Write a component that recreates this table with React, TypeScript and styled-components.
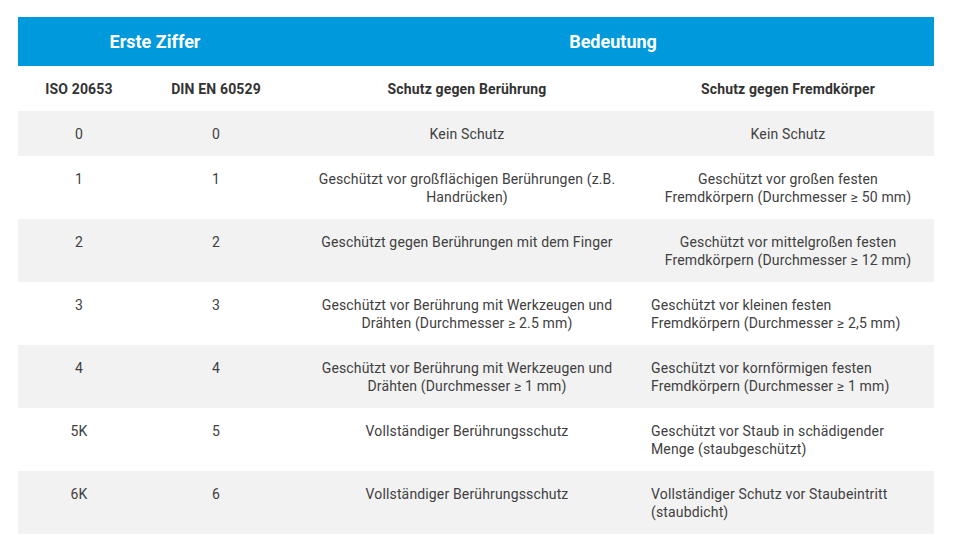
import React from "react";
import styled, { createGlobalStyle } from "styled-components";

const Global = createGlobalStyle`
  html, body { margin: 0; padding: 0; background: #ffffff; }
  body { font-family: Roboto, "Noto Sans", Arial, sans-serif; }
`;

const Page = styled.div`
  padding: 17px 0 0 18px;
`;

const Table = styled.table`
  width: 916px;
  border-collapse: collapse;
  table-layout: fixed;
  font-family: Roboto, "Noto Sans", Arial, sans-serif;
  font-size: 14px;
  line-height: 18px;
  color: #404040;
`;

const TopHead = styled.th`
  background: #0099dc;
  color: #ffffff;
  font-size: 18px;
  line-height: 21px;
  font-weight: 700;
  padding: 14px 9px;
  text-align: center;
`;

const SubHead = styled.th`
  padding: 14px 9px 13px;
  font-weight: 700;
  color: #333333;
  letter-spacing: 0.15px;
  text-align: center;
  vertical-align: top;
`;

const Row = styled.tr<{ $striped: boolean }>`
  background: ${(p) => (p.$striped ? "#f2f2f2" : "#ffffff")};
`;

const Cell = styled.td<{ $align?: "left" | "center" }>`
  padding: 14px 9px 13px;
  vertical-align: top;
  letter-spacing: 0.15px;
  text-align: ${(p) => p.$align ?? "center"};
  white-space: nowrap;
`;

type RowData = {
  iso: string;
  din: string;
  touch: string[];
  foreign: string[];
  foreignAlign: "left" | "center";
};

const rows: RowData[] = [
  { iso: "0", din: "0", touch: ["Kein Schutz"], foreign: ["Kein Schutz"], foreignAlign: "center" },
  {
    iso: "1",
    din: "1",
    touch: ["Geschützt vor großflächigen Berührungen (z.B.", "Handrücken)"],
    foreign: ["Geschützt vor großen festen", "Fremdkörpern (Durchmesser ≥ 50 mm)"],
    foreignAlign: "center",
  },
  {
    iso: "2",
    din: "2",
    touch: ["Geschützt gegen Berührungen mit dem Finger"],
    foreign: ["Geschützt vor mittelgroßen festen", "Fremdkörpern (Durchmesser ≥ 12 mm)"],
    foreignAlign: "center",
  },
  {
    iso: "3",
    din: "3",
    touch: ["Geschützt vor Berührung mit Werkzeugen und", "Drähten (Durchmesser ≥ 2.5 mm)"],
    foreign: ["Geschützt vor kleinen festen", "Fremdkörpern (Durchmesser ≥ 2,5 mm)"],
    foreignAlign: "left",
  },
  {
    iso: "4",
    din: "4",
    touch: ["Geschützt vor Berührung mit Werkzeugen und", "Drähten (Durchmesser ≥ 1 mm)"],
    foreign: ["Geschützt vor kornförmigen festen", "Fremdkörpern (Durchmesser ≥ 1 mm)"],
    foreignAlign: "left",
  },
  {
    iso: "5K",
    din: "5",
    touch: ["Vollständiger Berührungsschutz"],
    foreign: ["Geschützt vor Staub in schädigender", "Menge (staubgeschützt)"],
    foreignAlign: "left",
  },
  {
    iso: "6K",
    din: "6",
    touch: ["Vollständiger Berührungsschutz"],
    foreign: ["Vollständiger Schutz vor Staubeintritt", "(staubdicht)"],
    foreignAlign: "left",
  },
];

const Lines = ({ lines }: { lines: string[] }) => (
  <>
    {lines.map((l, i) => (
      <React.Fragment key={i}>
        {i > 0 && <br />}
        {l}
      </React.Fragment>
    ))}
  </>
);

export default function App() {
  return (
    <>
      <Global />
      <Page>
        <Table>
          <colgroup>
            <col style={{ width: 122 }} />
            <col style={{ width: 152 }} />
            <col style={{ width: 350 }} />
            <col style={{ width: 292 }} />
          </colgroup>
          <thead>
            <tr>
              <TopHead colSpan={2}>Erste Ziffer</TopHead>
              <TopHead colSpan={2}>Bedeutung</TopHead>
            </tr>
            <tr>
              <SubHead>ISO 20653</SubHead>
              <SubHead>DIN EN 60529</SubHead>
              <SubHead>Schutz gegen Berührung</SubHead>
              <SubHead>Schutz gegen Fremdkörper</SubHead>
            </tr>
          </thead>
          <tbody>
            {rows.map((r, i) => (
              <Row key={i} $striped={i % 2 === 0}>
                <Cell>{r.iso}</Cell>
                <Cell>{r.din}</Cell>
                <Cell>
                  <Lines lines={r.touch} />
                </Cell>
                <Cell $align={r.foreignAlign}>
                  <Lines lines={r.foreign} />
                </Cell>
              </Row>
            ))}
          </tbody>
        </Table>
      </Page>
    </>
  );
}
